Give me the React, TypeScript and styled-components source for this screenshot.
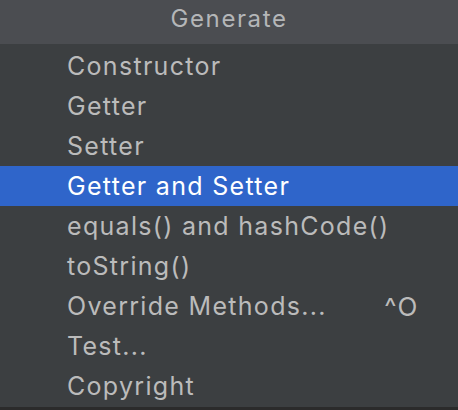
import * as React from 'react'
import styled, { createGlobalStyle } from 'styled-components'

const GlobalStyle = createGlobalStyle`
  html, body {
    margin: 0;
    padding: 0;
    background: #2b2b2b;
  }
  body {
    font-family: Inter, "Noto Sans", sans-serif;
  }
`

const Popup = styled.div`
  width: 458px;
  height: 407px;
  background: #3c3f41;
  display: flex;
  flex-direction: column;
`

const Header = styled.div`
  height: 44px;
  background: #4b4d51;
  color: #b4b6b8;
  font-size: 24px;
  letter-spacing: 1.6px;
  display: flex;
  justify-content: center;
  align-items: flex-start;
  padding-top: 3px;
  box-sizing: border-box;
  line-height: 32px;
`

const List = styled.ul`
  list-style: none;
  margin: 0;
  padding: 2px 0 0;
`

interface ItemProps {
  selected?: boolean
}
const Item = styled.li<ItemProps>`
  height: 40px;
  display: flex;
  align-items: center;
  padding: 0 39px 0 67px;
  font-size: 25px;
  letter-spacing: 1.3px;
  background: ${(p) => (p.selected ? '#2f65ca' : 'transparent')};
  color: ${(p) => (p.selected ? '#ffffff' : '#bbbbbb')};
`

const Label = styled.span`
  flex: 1;
  white-space: nowrap;
`

const Shortcut = styled.span`
  white-space: nowrap;
  font-size: 26px;
  letter-spacing: 1.5px;
`

const items: Array<{ label: string; shortcut?: string }> = [
  { label: 'Constructor' },
  { label: 'Getter' },
  { label: 'Setter' },
  { label: 'Getter and Setter' },
  { label: 'equals() and hashCode()' },
  { label: 'toString()' },
  { label: 'Override Methods...', shortcut: '^O' },
  { label: 'Test...' },
  { label: 'Copyright' }
]

const App = () => (
  <>
    <GlobalStyle />
    <Popup>
      <Header>Generate</Header>
      <List>
        {items.map((item) => (
          <Item key={item.label} selected={item.label === 'Getter and Setter'}>
            <Label>{item.label}</Label>
            {item.shortcut && <Shortcut>{item.shortcut}</Shortcut>}
          </Item>
        ))}
      </List>
    </Popup>
  </>
)

export default App
